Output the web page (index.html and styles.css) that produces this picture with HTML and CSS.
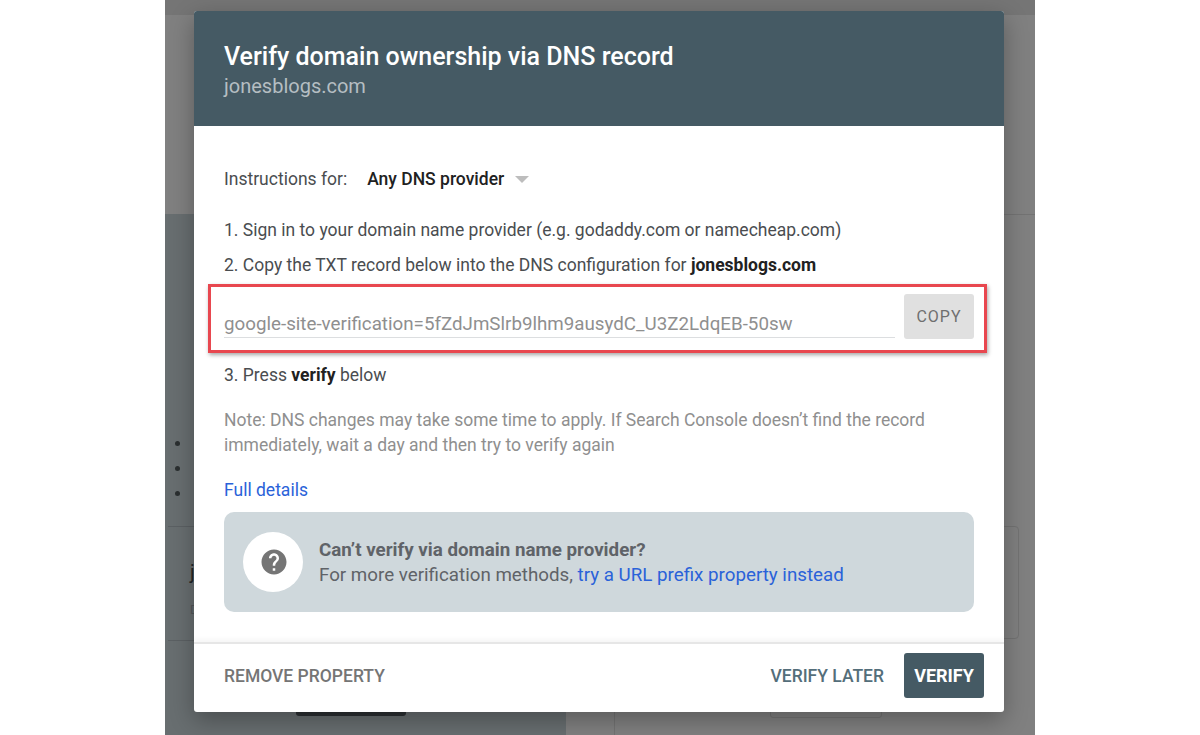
FILE: index.html
```html
<!DOCTYPE html>
<html lang="en">
<head>
    <meta charset="UTF-8">
    <meta name="viewport" content="width=device-width, initial-scale=1.0">
    <title>Verify domain ownership</title>
    <link rel="stylesheet" href="styles.css">
</head>
<body>

<div class="stage">
    <!-- Dimmed page behind the dialog -->
    <div class="backdrop">
        <div class="backdrop-top"></div>
        <div class="backdrop-left">
            <span class="dot dot-1"></span>
            <span class="dot dot-2"></span>
            <span class="dot dot-3"></span>
            <span class="rule rule-1"></span>
            <span class="rule rule-2"></span>
            <span class="peek-letter">j</span>
            <span class="peek-sub">D</span>
            <span class="peek-button"></span>
        </div>
        <div class="backdrop-right">
            <span class="peek-card"></span>
            <span class="peek-outline"></span>
        </div>
    </div>

    <div class="dialog">
        <header class="dialog-header">
            <h1>Verify domain ownership via DNS record</h1>
            <p>jonesblogs.com</p>
        </header>

        <div class="dialog-body">
            <div class="provider">
                <span class="provider-label">Instructions for:</span>
                <span class="provider-value">Any DNS provider</span>
                <span class="provider-arrow"></span>
            </div>

            <p class="step step-1">1. Sign in to your domain name provider (e.g. godaddy.com or namecheap.com)</p>
            <p class="step step-2">2. Copy the TXT record below into the DNS configuration for <b>jonesblogs.com</b></p>

            <div class="record">
                <div class="record-text">google-site-verification=5fZdJmSlrb9lhm9ausydC_U3Z2LdqEB-50sw</div>
                <button class="copy-btn">COPY</button>
            </div>

            <p class="step step-3">3. Press <b>verify</b> below</p>

            <p class="note">Note: DNS changes may take some time to apply. If Search Console doesn’t find the record immediately, wait a day and then try to verify again</p>

            <a class="full-details" href="#">Full details</a>

            <div class="alt-box">
                <div class="alt-icon">
                    <svg width="30" height="30" viewBox="0 0 24 24">
                        <path fill="#757575" d="M12 2C6.48 2 2 6.48 2 12s4.48 10 10 10 10-4.48 10-10S17.52 2 12 2zm1 17h-2v-2h2v2zm2.07-7.75l-.9.92C13.45 12.9 13 13.5 13 15h-2v-.5c0-1.1.45-2.1 1.17-2.83l1.24-1.26c.37-.36.59-.86.59-1.41 0-1.1-.9-2-2-2s-2 .9-2 2H8c0-2.21 1.79-4 4-4s4 1.79 4 4c0 .88-.36 1.68-.93 2.25z"/>
                    </svg>
                </div>
                <div class="alt-text">
                    <strong>Can’t verify via domain name provider?</strong>
                    <span>For more verification methods, <a href="#">try a URL prefix property instead</a></span>
                </div>
            </div>
        </div>

        <footer class="dialog-footer">
            <button class="text-btn remove-btn">REMOVE PROPERTY</button>
            <div class="footer-right">
                <button class="text-btn later-btn">VERIFY LATER</button>
                <button class="verify-btn">VERIFY</button>
            </div>
        </footer>
    </div>
</div>

</body>
</html>
```

FILE: styles.css
```css
/* Page */
html, body {
    margin: 0;
    padding: 0;
}

body {
    font-family: Roboto, "Liberation Sans", sans-serif;
    background-color: #fff;
    color: #3c4043;
    overflow: hidden;
}

p {
    margin: 0;
}

button {
    font-family: inherit;
    border: none;
    background: none;
    padding: 0;
    cursor: pointer;
}

a {
    color: #2a62d9;
    text-decoration: none;
}

.stage {
    position: relative;
    width: 870px;
    height: 735px;
    margin-left: 165px;
    overflow: hidden;
}

/* Dimmed page behind the dialog */
.backdrop {
    position: absolute;
    inset: 0;
    background-color: #808080;
}

.backdrop-top {
    height: 15px;
    background-color: #757575;
}

.backdrop-left {
    position: absolute;
    left: 0;
    top: 214px;
    width: 401px;
    height: 521px;
    background-color: #686e70;
}

.dot {
    position: absolute;
    left: 10px;
    width: 5px;
    height: 5px;
    border-radius: 50%;
    background-color: #2b2f30;
}

.dot-1 { top: 227px; }
.dot-2 { top: 252px; }
.dot-3 { top: 277px; }

.rule {
    position: absolute;
    left: 3px;
    width: 26px;
    height: 1px;
    background-color: #5b6063;
}

.rule-1 { top: 312px; }
.rule-2 { top: 426px; }

.peek-letter {
    position: absolute;
    left: 25px;
    top: 346px;
    font-size: 20px;
    color: #232526;
}

.peek-sub {
    position: absolute;
    left: 25px;
    top: 388px;
    font-size: 13px;
    color: #53575a;
}

.peek-button {
    position: absolute;
    left: 131px;
    top: 479px;
    width: 110px;
    height: 23px;
    border-radius: 3px;
    background-color: #2c3033;
}

.backdrop-right {
    position: absolute;
    left: 449px;
    top: 214px;
    width: 421px;
    height: 521px;
    border-top: 1px solid #737373;
    border-left: 1px solid #737373;
}

.peek-card {
    position: absolute;
    left: 359px;
    top: 311px;
    width: 43px;
    height: 111px;
    border: 1px solid #737373;
    border-radius: 4px;
}

.peek-outline {
    position: absolute;
    left: 155px;
    top: 479px;
    width: 110px;
    height: 22px;
    border: 1px solid #737373;
    border-radius: 3px;
}

/* Dialog */
.dialog {
    position: absolute;
    left: 29px;
    top: 11px;
    width: 810px;
    height: 701px;
    display: flex;
    flex-direction: column;
    background-color: #fff;
    border-radius: 3px;
    overflow: hidden;
    box-shadow: 0 8px 24px rgba(0, 0, 0, 0.3);
}

.dialog-header {
    height: 115px;
    flex-shrink: 0;
    box-sizing: border-box;
    padding: 30px 30px 0;
    background-color: #455a64;
}

.dialog-header h1 {
    margin: 0;
    font-size: 25px;
    line-height: 31px;
    font-weight: 500;
    color: #fff;
}

.dialog-header p {
    font-size: 20px;
    line-height: 28px;
    color: #b5bec2;
}

.dialog-body {
    flex: 1;
    padding: 41px 30px 0;
    font-size: 17.5px;
    line-height: 24px;
    color: #4a4d50;
}

/* Provider select */
.provider {
    display: flex;
    align-items: center;
    height: 24px;
}

.provider-label {
    margin-right: 20px;
}

.provider-value {
    color: #212121;
    font-weight: 500;
    margin-right: 11px;
}

.provider-arrow {
    width: 0;
    height: 0;
    border-left: 7px solid transparent;
    border-right: 7px solid transparent;
    border-top: 7px solid #bdbdbd;
}

/* Steps */
.step b {
    font-weight: 700;
    color: #212121;
}

.step-1 {
    margin-top: 27px;
}

.step-2 {
    margin-top: 11px;
}

.step-3 {
    margin-top: 10px;
}

/* TXT record box */
.record {
    display: flex;
    align-items: flex-start;
    justify-content: space-between;
    box-sizing: border-box;
    width: 779px;
    height: 69px;
    margin: 7px 0 0 -16px;
    padding: 7px 10px 0 13px;
    border: 3px solid #e8474f;
    box-shadow: 1px 2px 4px rgba(0, 0, 0, 0.35);
}

.record-text {
    width: 671px;
    height: 44px;
    box-sizing: border-box;
    padding-top: 18px;
    border-bottom: 1px solid #dcdee0;
    font-size: 18.75px;
    color: #8f8f8f;
    white-space: nowrap;
}

.copy-btn {
    width: 70px;
    height: 45px;
    border-radius: 3px;
    background-color: #e0e0e0;
    color: #6f6f6f;
    font-size: 16px;
    letter-spacing: 1px;
}

/* Note */
.note {
    margin-top: 21px;
    line-height: 25px;
    color: #8f8f8f;
}

.full-details {
    display: block;
    margin-top: 20px;
}

/* Other verification methods */
.alt-box {
    display: flex;
    align-items: center;
    height: 100px;
    margin-top: 10px;
    padding-left: 19px;
    border-radius: 10px;
    background-color: #cfd8dc;
}

.alt-icon {
    display: flex;
    align-items: center;
    justify-content: center;
    box-sizing: border-box;
    width: 60px;
    height: 60px;
    margin-right: 16px;
    padding-left: 2px;
    border-radius: 50%;
    background-color: #fff;
}

.alt-text {
    display: flex;
    flex-direction: column;
    margin-top: 2px;
    font-size: 18.75px;
    line-height: 25px;
    color: #5f6368;
}

.alt-text strong {
    font-weight: 700;
}

/* Footer */
.dialog-footer {
    display: flex;
    align-items: center;
    justify-content: space-between;
    height: 63px;
    flex-shrink: 0;
    padding: 0 20px 5px 30px;
    border-top: 2px solid #e6e6e6;
    box-shadow: 0 -3px 5px rgba(0, 0, 0, 0.04);
}

.footer-right {
    display: flex;
    align-items: center;
    gap: 20px;
}

.text-btn {
    font-size: 17.5px;
    font-weight: 500;
}

.remove-btn {
    color: #757575;
}

.later-btn {
    color: #546e7a;
}

.verify-btn {
    width: 80px;
    height: 45px;
    border-radius: 3px;
    background-color: #455a64;
    color: #fff;
    font-size: 18px;
    font-weight: 700;
}
```
